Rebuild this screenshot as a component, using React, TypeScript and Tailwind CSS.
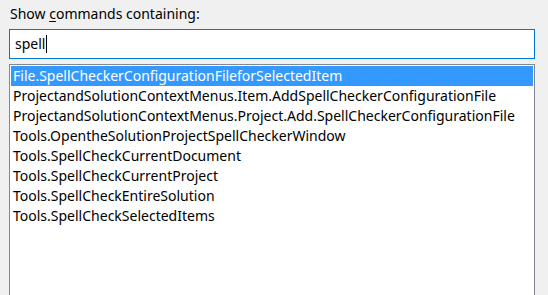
import { useState } from "react";

const commands = [
  "File.SpellCheckerConfigurationFileforSelectedItem",
  "ProjectandSolutionContextMenus.Item.AddSpellCheckerConfigurationFile",
  "ProjectandSolutionContextMenus.Project.Add.SpellCheckerConfigurationFile",
  "Tools.OpentheSolutionProjectSpellCheckerWindow",
  "Tools.SpellCheckCurrentDocument",
  "Tools.SpellCheckCurrentProject",
  "Tools.SpellCheckEntireSolution",
  "Tools.SpellCheckSelectedItems",
];

export default function App() {
  const [selected, setSelected] = useState(0);
  const query = "spell";

  return (
    <div
      className="w-[548px] h-[295px] overflow-hidden bg-[#f0f0f0] text-black text-[14px] pl-[9px] pr-[13px]"
      style={{ fontFamily: '"Noto Sans", "Open Sans", sans-serif' }}
    >
      <div className="pt-[3px] pl-[1px] h-[29px] leading-[22px]">
        Show <span className="underline underline-offset-2">c</span>ommands containing:
      </div>

      {/* Search box with a visible caret */}
      <div className="h-[30px] border border-[#0078d7] bg-white flex items-center px-[5px]">
        <span className="leading-5">{query}</span>
        <span className="ml-px w-px h-[18px] bg-black" />
      </div>

      {/* Command list */}
      <div className="mt-[5px] h-[240px] border border-[#828790] bg-white p-px">
        {commands.map((cmd, i) => (
          <div
            key={cmd}
            onClick={() => setSelected(i)}
            className={
              i === selected
                ? "h-5 leading-5 px-[2px] bg-[#3399ff] text-white whitespace-nowrap"
                : "h-5 leading-5 px-[2px] whitespace-nowrap"
            }
          >
            {cmd}
          </div>
        ))}
      </div>
    </div>
  );
}
